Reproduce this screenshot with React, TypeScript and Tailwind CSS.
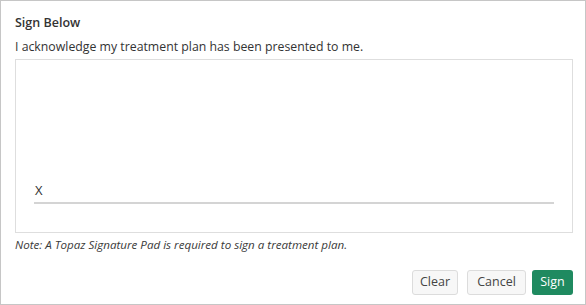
import React from "react";

export default function App() {
  return (
    <div
      className="w-[586px] h-[305px] border border-[#c6c6c6] bg-white flex flex-col text-[#333]"
      style={{ fontFamily: '"Open Sans", "Liberation Sans", sans-serif' }}
    >
      <div className="pl-[14px] pr-[12px] pt-[13px] flex flex-col">
        <div className="text-[12.5px] font-semibold leading-[18px]">Sign Below</div>
        <div className="mt-[6px] text-[12.3px] leading-[18px]">
          I acknowledge my treatment plan has been presented to me.
        </div>
        <div className="mt-[3px] h-[174px] border border-[#dedede] flex flex-col justify-end pl-[18px] pr-[18px] pb-[28px]">
          <div className="text-[13px] leading-[16px] pl-[1px]">X</div>
          <div className="mt-[4px] h-[2px] bg-[#d4d4d4]"></div>
        </div>
        <div className="mt-[4px] text-[11.6px] italic leading-[16px] text-[#3a3a3a]">
          Note: A Topaz Signature Pad is required to sign a treatment plan.
        </div>
        <div className="mt-[17px] flex justify-end gap-[9px]">
          <button className="h-[25px] w-[46px] rounded-[3px] border border-[#dcdcdc] bg-[#f7f7f7] text-[12.5px] text-[#444]">
            Clear
          </button>
          <button className="h-[25px] w-[59px] rounded-[3px] border border-[#dcdcdc] bg-[#f7f7f7] text-[12.5px] text-[#444] -mr-[3px]">
            Cancel
          </button>
          <button className="h-[25px] w-[41px] rounded-[3px] bg-[#1f8a60] text-[12.5px] text-white">
            Sign
          </button>
        </div>
      </div>
    </div>
  );
}
